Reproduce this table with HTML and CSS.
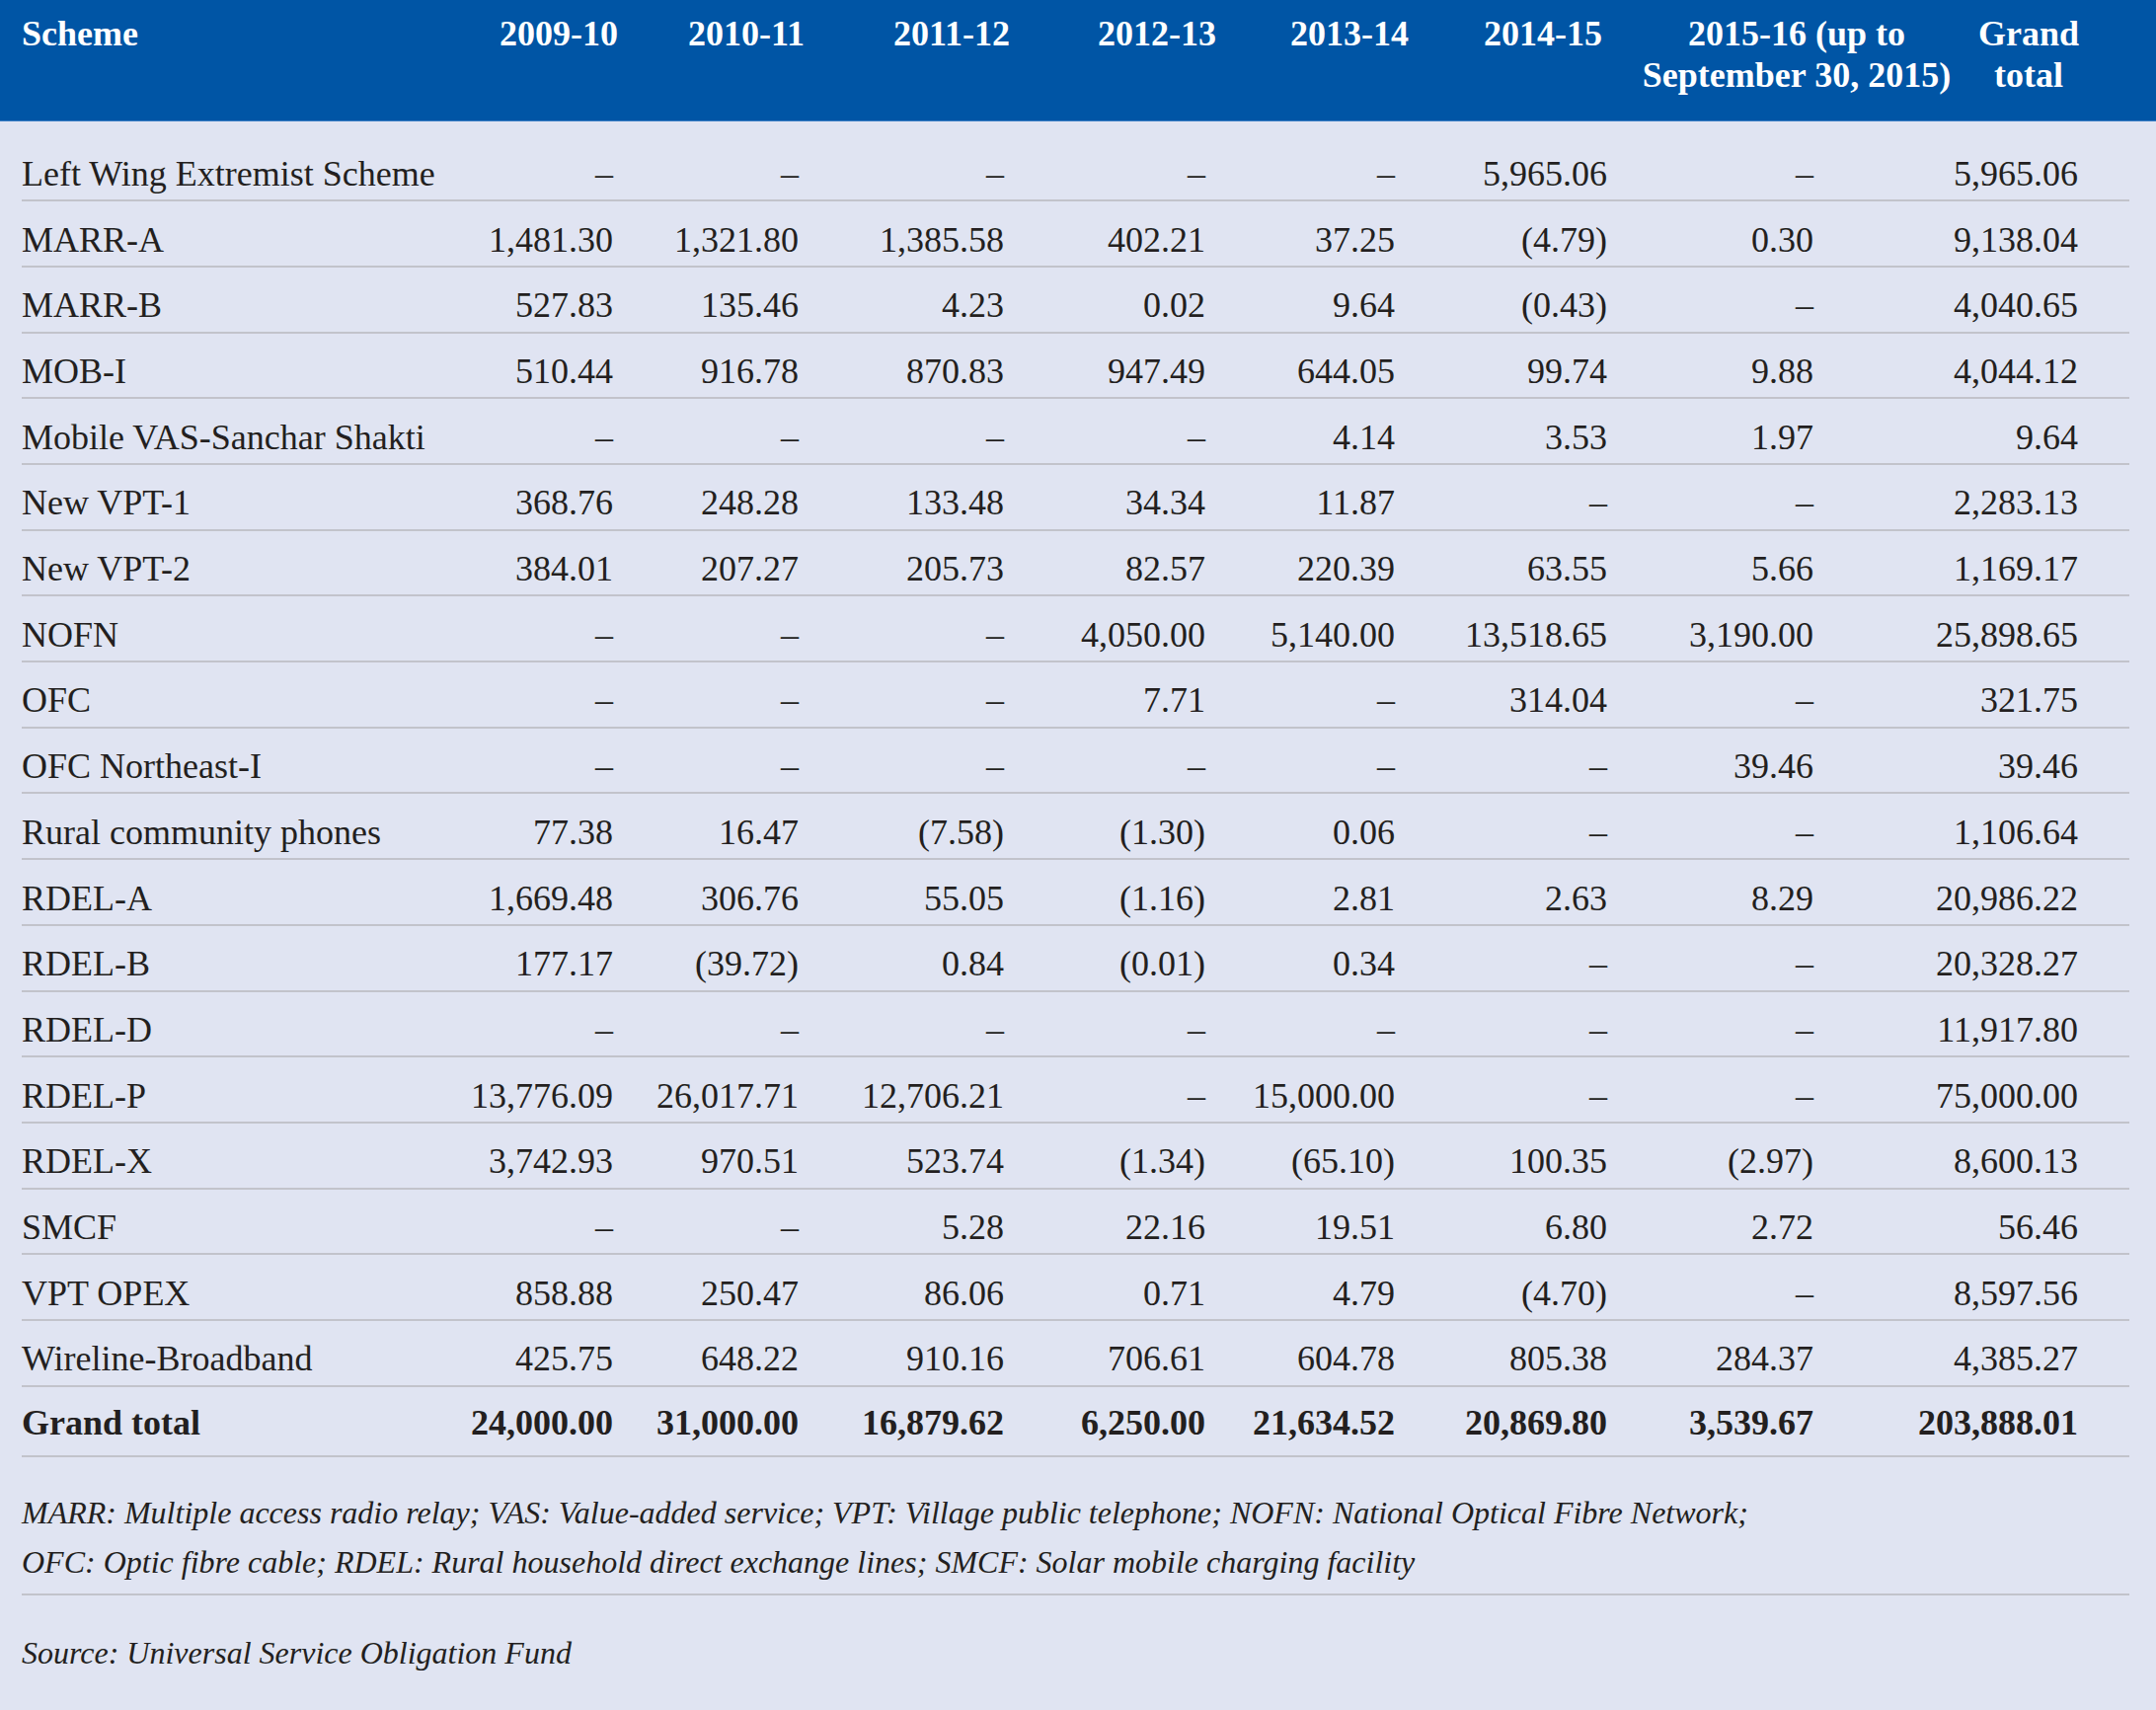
FILE: index.html
```html
<!DOCTYPE html>
<html lang="en">
<head>
<meta charset="utf-8">
<title>USOF disbursement by scheme</title>
<link rel="stylesheet" href="styles.css">
</head>
<body>
<div class="sheet">
  <div class="head">
    <div class="hc hc-left">Scheme</div>
    <div class="hc">2009-10</div>
    <div class="hc">2010-11</div>
    <div class="hc">2011-12</div>
    <div class="hc">2012-13</div>
    <div class="hc">2013-14</div>
    <div class="hc hc-gap">2014-15</div>
    <div class="hc hc-center">2015-16 (up to<br>September 30, 2015)</div>
    <div class="hc hc-center">Grand<br>total</div>
  </div>

  <div class="rows">
    <div class="row"><div class="name">Left Wing Extremist Scheme</div><div class="v">–</div><div class="v">–</div><div class="v">–</div><div class="v">–</div><div class="v">–</div><div class="v">5,965.06</div><div class="v">–</div><div class="v">5,965.06</div></div>
    <div class="row"><div class="name">MARR-A</div><div class="v">1,481.30</div><div class="v">1,321.80</div><div class="v">1,385.58</div><div class="v">402.21</div><div class="v">37.25</div><div class="v">(4.79)</div><div class="v">0.30</div><div class="v">9,138.04</div></div>
    <div class="row"><div class="name">MARR-B</div><div class="v">527.83</div><div class="v">135.46</div><div class="v">4.23</div><div class="v">0.02</div><div class="v">9.64</div><div class="v">(0.43)</div><div class="v">–</div><div class="v">4,040.65</div></div>
    <div class="row"><div class="name">MOB-I</div><div class="v">510.44</div><div class="v">916.78</div><div class="v">870.83</div><div class="v">947.49</div><div class="v">644.05</div><div class="v">99.74</div><div class="v">9.88</div><div class="v">4,044.12</div></div>
    <div class="row"><div class="name">Mobile VAS-Sanchar Shakti</div><div class="v">–</div><div class="v">–</div><div class="v">–</div><div class="v">–</div><div class="v">4.14</div><div class="v">3.53</div><div class="v">1.97</div><div class="v">9.64</div></div>
    <div class="row"><div class="name">New VPT-1</div><div class="v">368.76</div><div class="v">248.28</div><div class="v">133.48</div><div class="v">34.34</div><div class="v">11.87</div><div class="v">–</div><div class="v">–</div><div class="v">2,283.13</div></div>
    <div class="row"><div class="name">New VPT-2</div><div class="v">384.01</div><div class="v">207.27</div><div class="v">205.73</div><div class="v">82.57</div><div class="v">220.39</div><div class="v">63.55</div><div class="v">5.66</div><div class="v">1,169.17</div></div>
    <div class="row"><div class="name">NOFN</div><div class="v">–</div><div class="v">–</div><div class="v">–</div><div class="v">4,050.00</div><div class="v">5,140.00</div><div class="v">13,518.65</div><div class="v">3,190.00</div><div class="v">25,898.65</div></div>
    <div class="row"><div class="name">OFC</div><div class="v">–</div><div class="v">–</div><div class="v">–</div><div class="v">7.71</div><div class="v">–</div><div class="v">314.04</div><div class="v">–</div><div class="v">321.75</div></div>
    <div class="row"><div class="name">OFC Northeast-I</div><div class="v">–</div><div class="v">–</div><div class="v">–</div><div class="v">–</div><div class="v">–</div><div class="v">–</div><div class="v">39.46</div><div class="v">39.46</div></div>
    <div class="row"><div class="name">Rural community phones</div><div class="v">77.38</div><div class="v">16.47</div><div class="v">(7.58)</div><div class="v">(1.30)</div><div class="v">0.06</div><div class="v">–</div><div class="v">–</div><div class="v">1,106.64</div></div>
    <div class="row"><div class="name">RDEL-A</div><div class="v">1,669.48</div><div class="v">306.76</div><div class="v">55.05</div><div class="v">(1.16)</div><div class="v">2.81</div><div class="v">2.63</div><div class="v">8.29</div><div class="v">20,986.22</div></div>
    <div class="row"><div class="name">RDEL-B</div><div class="v">177.17</div><div class="v">(39.72)</div><div class="v">0.84</div><div class="v">(0.01)</div><div class="v">0.34</div><div class="v">–</div><div class="v">–</div><div class="v">20,328.27</div></div>
    <div class="row"><div class="name">RDEL-D</div><div class="v">–</div><div class="v">–</div><div class="v">–</div><div class="v">–</div><div class="v">–</div><div class="v">–</div><div class="v">–</div><div class="v">11,917.80</div></div>
    <div class="row"><div class="name">RDEL-P</div><div class="v">13,776.09</div><div class="v">26,017.71</div><div class="v">12,706.21</div><div class="v">–</div><div class="v">15,000.00</div><div class="v">–</div><div class="v">–</div><div class="v">75,000.00</div></div>
    <div class="row"><div class="name">RDEL-X</div><div class="v">3,742.93</div><div class="v">970.51</div><div class="v">523.74</div><div class="v">(1.34)</div><div class="v">(65.10)</div><div class="v">100.35</div><div class="v">(2.97)</div><div class="v">8,600.13</div></div>
    <div class="row"><div class="name">SMCF</div><div class="v">–</div><div class="v">–</div><div class="v">5.28</div><div class="v">22.16</div><div class="v">19.51</div><div class="v">6.80</div><div class="v">2.72</div><div class="v">56.46</div></div>
    <div class="row"><div class="name">VPT OPEX</div><div class="v">858.88</div><div class="v">250.47</div><div class="v">86.06</div><div class="v">0.71</div><div class="v">4.79</div><div class="v">(4.70)</div><div class="v">–</div><div class="v">8,597.56</div></div>
    <div class="row"><div class="name">Wireline-Broadband</div><div class="v">425.75</div><div class="v">648.22</div><div class="v">910.16</div><div class="v">706.61</div><div class="v">604.78</div><div class="v">805.38</div><div class="v">284.37</div><div class="v">4,385.27</div></div>
    <div class="row row-total"><div class="name">Grand total</div><div class="v">24,000.00</div><div class="v">31,000.00</div><div class="v">16,879.62</div><div class="v">6,250.00</div><div class="v">21,634.52</div><div class="v">20,869.80</div><div class="v">3,539.67</div><div class="v">203,888.01</div></div>
  </div>

  <div class="notes">
    <p class="note-line">MARR: Multiple access radio relay; VAS: Value-added service; VPT: Village public telephone; NOFN: National Optical Fibre Network;</p>
    <p class="note-line">OFC: Optic fibre cable; RDEL: Rural household direct exchange lines; SMCF: Solar mobile charging facility</p>
  </div>
  <p class="source">Source: Universal Service Obligation Fund</p>
</div>
</body>
</html>
```

FILE: styles.css
```css
html, body {
  margin: 0;
  padding: 0;
}

body {
  background: #e0e4f2;
  color: #231f20;
  font-family: "Liberation Serif", "Times New Roman", serif;
  min-height: 1732px;
}

.sheet {
  width: 2184px;
}

/* Header band */
.head {
  box-sizing: border-box;
  height: 123px;
  background: #0055a5;
  border-bottom: 1px solid #3f7fc6;
  color: #ffffff;
  font-weight: bold;
  font-size: 36px;
  line-height: 41.6px;
  padding: 14px 0 0 22px;
  display: grid;
  grid-template-columns: 458px 146px 189px 208px 209px 195px 213px 360px 110px;
  align-items: start;
}

.hc {
  text-align: right;
  white-space: nowrap;
}

.hc-left {
  text-align: left;
}

.hc-gap {
  padding-right: 17px;
}

.hc-center {
  text-align: center;
}

/* Data rows */
.rows {
  padding: 14.6px 27px 0 22px;
}

.row {
  display: grid;
  grid-template-columns: 408px 191px 188px 208px 204px 192px 215px 209px 268px;
  padding: 12.4px 52px 0 0;
  border-bottom: 2px solid #c2c3cb;
  font-size: 36px;
  line-height: 52.3px;
  white-space: nowrap;
}

.row .name {
  text-align: left;
}

.row .v {
  text-align: right;
}

.row-total {
  font-weight: bold;
  padding-top: 10.7px;
  padding-bottom: 6.3px;
}

/* Footnotes */
.notes {
  margin: 0 27px 0 22px;
  padding: 30.9px 0 7.5px 0;
  border-bottom: 2px solid #c2c3cb;
}

.note-line,
.source {
  margin: 0;
  font-style: italic;
  font-size: 32px;
  line-height: 50px;
  white-space: nowrap;
}

.source {
  margin-left: 22px;
  padding-top: 32.5px;
}
```
